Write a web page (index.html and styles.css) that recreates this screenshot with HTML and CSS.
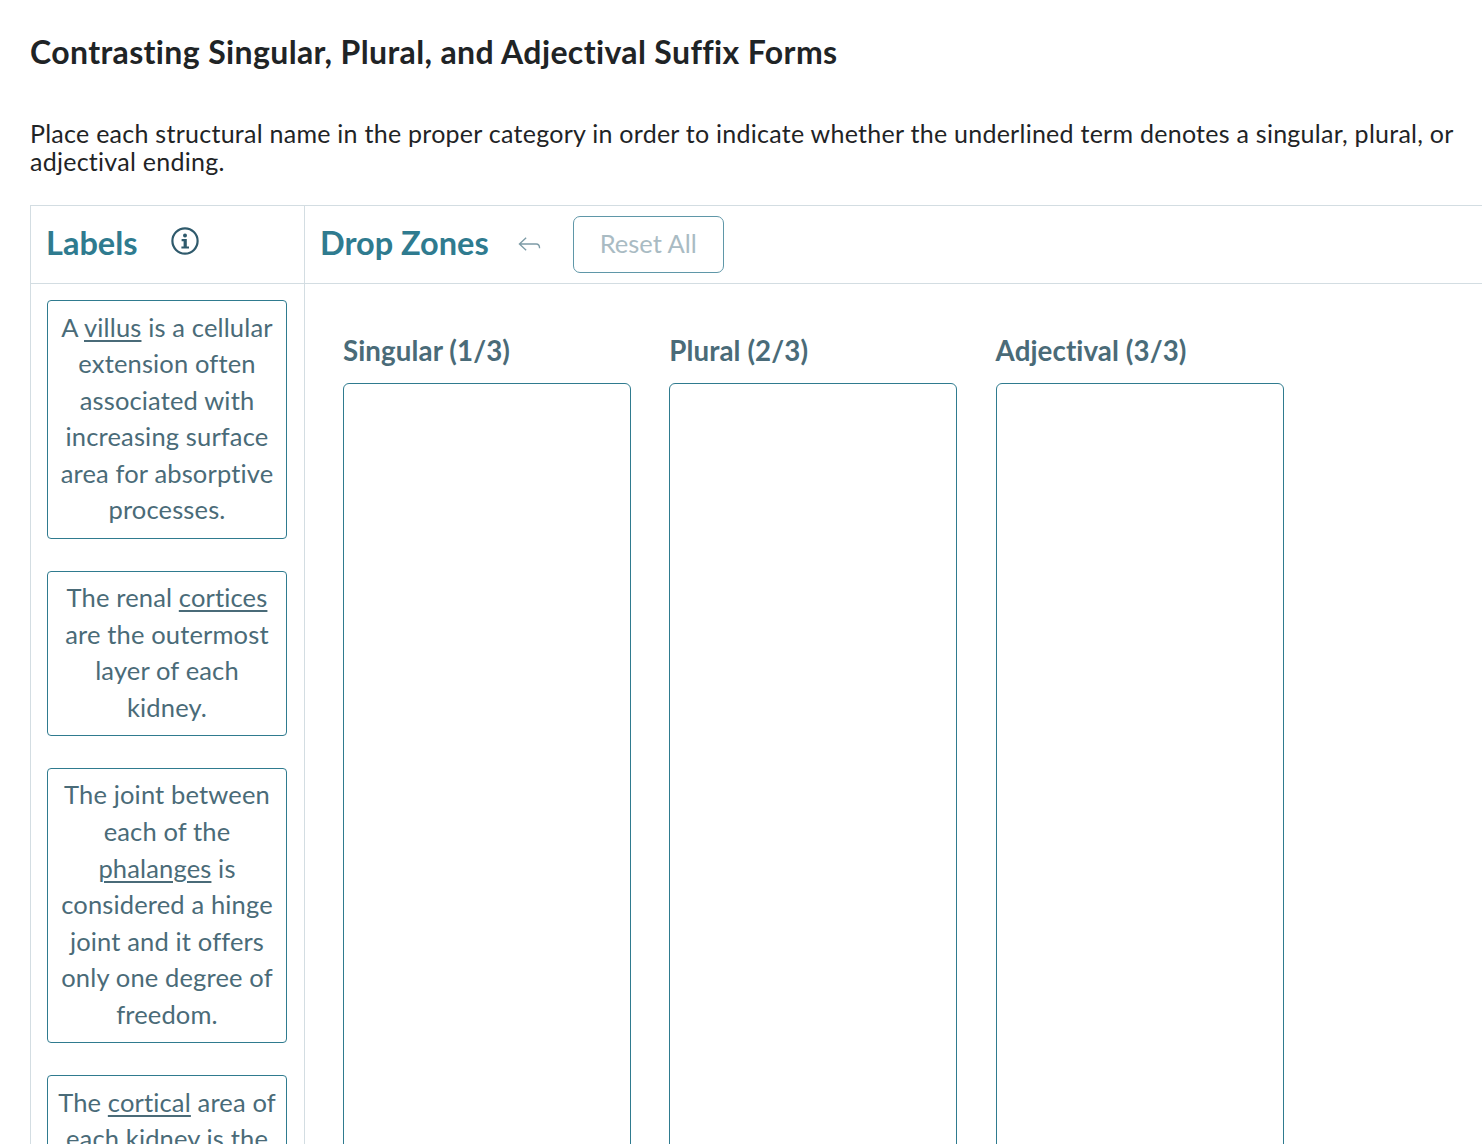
FILE: index.html
```html
<!DOCTYPE html>
<html lang="en">
<head>
<meta charset="utf-8">
<title>Contrasting Singular, Plural, and Adjectival Suffix Forms</title>
<link rel="stylesheet" href="styles.css">
</head>
<body>
<main class="page">
  <h1 class="title">Contrasting Singular, Plural, and Adjectival Suffix Forms</h1>
  <p class="intro">Place each structural name in the proper category in order to indicate whether the underlined term denotes a singular, plural, or adjectival ending.</p>
  <section class="board">
    <aside class="labels-col">
      <header class="head head-labels">
        <h2 class="head-title">Labels</h2>
        <svg class="info-icon" viewBox="0 0 28 28" width="28" height="28" aria-hidden="true">
          <circle cx="14" cy="14" r="12.6" fill="none" stroke="#2f5a6c" stroke-width="2.2"/>
          <circle cx="14" cy="8.4" r="2" fill="#2f5a6c"/>
          <path d="M10.6 12h5.2v7.4h2.2v2.2h-7.6v-2.2h2.2v-5.2h-2z" fill="#2f5a6c"/>
        </svg>
      </header>
      <div class="cards">
        <div class="card">A <u>villus</u> is a cellular extension often associated with increasing surface area for absorptive processes.</div>
        <div class="card">The renal <u>cortices</u> are the outermost layer of each kidney.</div>
        <div class="card">The joint between each of the <u>phalanges</u> is considered a hinge joint and it offers only one degree of freedom.</div>
        <div class="card">The <u>cortical</u> area of each kidney is the outermost layer.</div>
      </div>
    </aside>
    <div class="zones-col">
      <header class="head head-zones">
        <h2 class="head-title">Drop Zones</h2>
        <svg class="undo-icon" viewBox="0 0 24 16" width="23" height="16" aria-hidden="true">
          <path d="M8.5 1.5 1.5 8l7 6.5M1.5 8H19q3.5 0 3.5 4.5" fill="none" stroke="#7d9ba6" stroke-width="1.4"/>
        </svg>
        <button class="reset" type="button">Reset All</button>
      </header>
      <div class="zones">
        <div class="zone"><h3 class="zone-title">Singular (1/3)</h3><div class="zone-box"></div></div>
        <div class="zone"><h3 class="zone-title">Plural (2/3)</h3><div class="zone-box"></div></div>
        <div class="zone"><h3 class="zone-title">Adjectival (3/3)</h3><div class="zone-box"></div></div>
      </div>
    </div>
  </section>
</main>
</body>
</html>
```
FILE: styles.css
```css
html, body { margin: 0; height: 100%; overflow: hidden; background: #fff; }
body { font-family: "Lato", "Open Sans", sans-serif; color: #1f2426; font-variant-ligatures: none; }
.page { padding: 30px 0 0 30px; width: 1452px; }
.title { margin: 0; font-size: 32px; line-height: 44px; letter-spacing: .37px; font-weight: 700; color: #1f2426; }
.intro { margin: 45px 0 0; font-size: 25px; line-height: 28px; letter-spacing: .26px; width: 1430px; }
.board { display: grid; grid-template-columns: 274px 1fr; margin-top: 30px; border-left: 1px solid #d3dde2; border-top: 1px solid #d3dde2; height: 1000px; }
.labels-col { border-right: 1px solid #d3dde2; }
.head { display: flex; align-items: center; height: 77px; border-bottom: 1px solid #d3dde2; }
.head-labels { padding-left: 15px; gap: 33px; }
.head-zones { padding-left: 15px; }
.head-title { margin: -4px 0 0; font-size: 32.5px; font-weight: 700; color: #2f7b8f; }
.info-icon { margin-top: -8px; }
.undo-icon { margin-left: 29px; margin-top: -1px; }
.reset { margin-left: 32px; width: 151px; height: 57px; padding: 0 0 4px; border: 1px solid #5f97a8; border-radius: 7px; background: #fff; color: #a9bbc3; font: 400 25.5px "Lato", sans-serif; }
.cards { display: flex; flex-direction: column; gap: 32px; padding: 16px 17px 16px 16px; }
.card { border: 1px solid #2f7b8f; border-radius: 4px; padding: 7.5px 8px 9.5px; text-align: center; font-size: 25.5px; line-height: 36.6px; letter-spacing: .15px; color: #4a6b78; }
.card u { text-underline-offset: 3px; text-decoration-thickness: 2px; }
.zones { display: flex; gap: 38.3px; padding: 48px 0 0 38px; }
.zone { width: 288px; flex: none; }
.zone-title { margin: 0; font-size: 27.7px; line-height: 38px; letter-spacing: .1px; font-weight: 700; color: #4a6b78; }
.zone-box { margin-top: 13px; height: 900px; border: 1px solid #2f7b8f; border-radius: 6px; }
```
